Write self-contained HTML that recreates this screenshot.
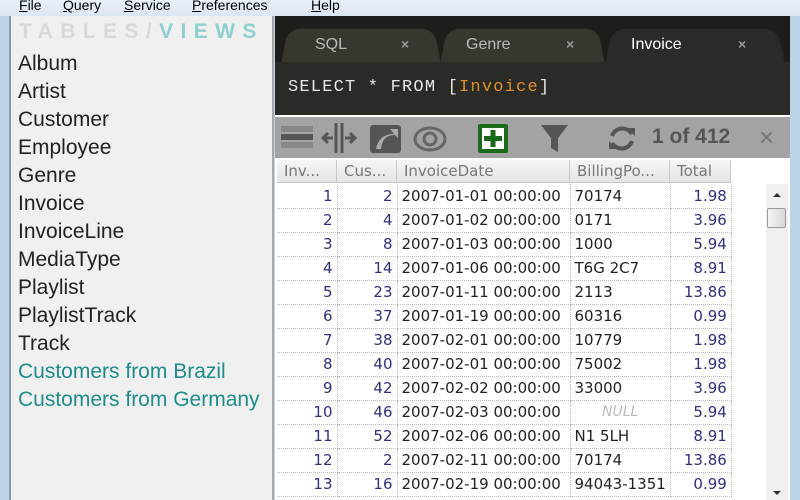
<!DOCTYPE html>
<html><head><meta charset="utf-8"><style>
*{margin:0;padding:0;box-sizing:border-box}
body{width:800px;height:500px;overflow:hidden;background:#bcd3ea;font-family:"Liberation Sans","DejaVu Sans",sans-serif;position:relative}
.menu{position:absolute;left:0;top:0;width:800px;height:16px;background:linear-gradient(#e9f0f8,#dbe6f3);font-size:14px;color:#000}
.menu span{position:absolute;top:-3px}
.menu u{text-decoration:underline}
.left{position:absolute;left:9px;top:16px;width:265px;height:484px;background:#f0f0f0;border-left:2px solid #8a9bb0;border-right:2px solid #a8a8a8}
.hdr{position:absolute;left:8px;top:4px;font-size:21px;font-weight:bold;letter-spacing:7.4px;color:#d8d8d8;white-space:nowrap}
.hdr b{color:#8fcfcf}
.item{position:absolute;left:7px;font-size:21px;color:#222}
.view{color:#1f8c8c}
.right{position:absolute;left:275px;top:16px;width:515px;height:484px;background:#fff}
.dark{position:absolute;left:0;top:0;width:515px;height:99px;background:#1d1d1a}
.code{position:absolute;left:0;top:46px;width:515px;height:53px;background:#2a2a26}
.tab{position:absolute;top:9px;height:40px;background:#37372f;border-radius:14px 14px 0 0;transform:perspective(60px) rotateX(8deg);transform-origin:bottom}
.tl{position:absolute;top:20px;font-size:16px;color:#bbb}
.tx{position:absolute;top:20px;font-size:14px;color:#999;font-weight:bold}
.sql{position:absolute;left:13px;top:62px;font-family:"Liberation Mono","DejaVu Sans Mono",monospace;font-size:17px;color:#e8e8e8;letter-spacing:1.2px}
.tb{position:absolute;left:0;top:101px;width:515px;height:41px;background:#a3a3a3}
.th{position:absolute;top:144px;height:23px;background:linear-gradient(#f6f6f6,#e4e4e4);border-right:1px solid #c8c8c8;border-bottom:1px solid #c8c8c8;font-family:"DejaVu Sans",sans-serif;font-size:15px;color:#777;padding:2px 0 0 7px;white-space:nowrap;overflow:hidden}
table{position:absolute;left:2px;top:168px;border-collapse:collapse;font-family:"DejaVu Sans",sans-serif;font-size:15px;table-layout:fixed}
td{height:24px;border-right:1px dotted #bbb;border-bottom:1px dotted #bbb;padding:0 4px;white-space:nowrap;color:#222;overflow:hidden}
td.n{text-align:right;color:#303080}
td.nu{text-align:center;color:#bbb;font-style:italic;font-size:14px}
.sb{position:absolute;left:491px;top:168px;width:22px;height:316px;background:#f0f0f0}
</style></head><body>
<div class="menu"><span style="left:19px"><u>F</u>ile</span><span style="left:63px"><u>Q</u>uery</span><span style="left:124px"><u>S</u>ervice</span><span style="left:192px"><u>P</u>references</span><span style="left:311px"><u>H</u>elp</span></div>
<div class="left">
<div class="hdr">TABLES/<b>VIEWS</b></div>
<div class="item" style="top:36px">Album</div>
<div class="item" style="top:64px">Artist</div>
<div class="item" style="top:92px">Customer</div>
<div class="item" style="top:120px">Employee</div>
<div class="item" style="top:148px">Genre</div>
<div class="item" style="top:176px">Invoice</div>
<div class="item" style="top:204px">InvoiceLine</div>
<div class="item" style="top:232px">MediaType</div>
<div class="item" style="top:260px">Playlist</div>
<div class="item" style="top:288px">PlaylistTrack</div>
<div class="item" style="top:316px">Track</div>
<div class="item view" style="top:344px">Customers from Brazil</div>
<div class="item view" style="top:372px">Customers from Germany</div>
</div>
<div class="right">
<div class="dark"></div>
<div class="tab" style="left:6px;width:160px"></div>
<div class="tab" style="left:165px;width:165px"></div>
<div class="tab" style="left:330px;width:180px;background:#2a2a26"></div>
<div class="code"></div>
<div class="tl" style="left:40px">SQL</div><div class="tx" style="left:126px">×</div>
<div class="tl" style="left:191px">Genre</div><div class="tx" style="left:291px">×</div>
<div class="tl" style="left:356px;color:#fff">Invoice</div><div class="tx" style="left:463px">×</div>
<div class="sql">SELECT * FROM [<span style="color:#e0902a">Invoice</span>]</div>
<div class="tb">
<svg width="515" height="41" style="position:absolute;left:0;top:0">
<g fill="#555"><rect x="6" y="9" width="32" height="6" fill="#888"/><rect x="6" y="17" width="32" height="6"/><rect x="6" y="25" width="32" height="6" fill="#888"/></g>
<g stroke="#555" stroke-width="3" fill="none"><path d="M61 6v30M67 6v30M49 21h9M70 21h9"/><path d="M53 16l-5 5 5 5M75 16l5 5-5 5"/></g>
<rect x="95" y="8" width="31" height="28" rx="3" fill="#555"/><path d="M101 32c2-10 8-15 18-15l-4-5h8v9l-3-3c-8 0-13 4-14 14z" fill="#aaa"/>
<ellipse cx="155" cy="22" rx="15" ry="11" fill="none" stroke="#666" stroke-width="3"/><circle cx="155" cy="22" r="6" fill="none" stroke="#666" stroke-width="3"/>
<rect x="203" y="7" width="30" height="29" rx="2" fill="#1a6a1a"/><rect x="207" y="11" width="22" height="21" fill="#fff"/><path d="M218 13v17M209 21.5h18" stroke="#1a6a1a" stroke-width="5"/>
<path d="M266 8h27l-10 13v14l-7-4v-10z" fill="#555"/>
<path d="M357 17a11 11 0 0 0-20 2M337 26a11 11 0 0 0 20-2" stroke="#555" stroke-width="4" fill="none"/><path d="M352 11l8 0v8z M342 32l-8 0v-8z" fill="#555"/>
</svg>
<div style="position:absolute;left:377px;top:8px;font-size:21px;font-weight:bold;color:#555">1 of 412</div>
<div style="position:absolute;left:484px;top:5px;font-size:26px;color:#777">×</div>
</div>
<div class="th" style="left:2px;width:60px">Inv...</div>
<div class="th" style="left:62px;width:60px">Cus...</div>
<div class="th" style="left:122px;width:173px">InvoiceDate</div>
<div class="th" style="left:295px;width:100px">BillingPo...</div>
<div class="th" style="left:395px;width:61px">Total</div>
<table>
<colgroup><col style="width:60px"><col style="width:60px"><col style="width:173px"><col style="width:100px"><col style="width:61px"></colgroup>
<tr><td class="n">1</td><td class="n">2</td><td>2007-01-01 00:00:00</td><td>70174</td><td class="n">1.98</td></tr>
<tr><td class="n">2</td><td class="n">4</td><td>2007-01-02 00:00:00</td><td>0171</td><td class="n">3.96</td></tr>
<tr><td class="n">3</td><td class="n">8</td><td>2007-01-03 00:00:00</td><td>1000</td><td class="n">5.94</td></tr>
<tr><td class="n">4</td><td class="n">14</td><td>2007-01-06 00:00:00</td><td>T6G 2C7</td><td class="n">8.91</td></tr>
<tr><td class="n">5</td><td class="n">23</td><td>2007-01-11 00:00:00</td><td>2113</td><td class="n">13.86</td></tr>
<tr><td class="n">6</td><td class="n">37</td><td>2007-01-19 00:00:00</td><td>60316</td><td class="n">0.99</td></tr>
<tr><td class="n">7</td><td class="n">38</td><td>2007-02-01 00:00:00</td><td>10779</td><td class="n">1.98</td></tr>
<tr><td class="n">8</td><td class="n">40</td><td>2007-02-01 00:00:00</td><td>75002</td><td class="n">1.98</td></tr>
<tr><td class="n">9</td><td class="n">42</td><td>2007-02-02 00:00:00</td><td>33000</td><td class="n">3.96</td></tr>
<tr><td class="n">10</td><td class="n">46</td><td>2007-02-03 00:00:00</td><td class="nu">NULL</td><td class="n">5.94</td></tr>
<tr><td class="n">11</td><td class="n">52</td><td>2007-02-06 00:00:00</td><td>N1 5LH</td><td class="n">8.91</td></tr>
<tr><td class="n">12</td><td class="n">2</td><td>2007-02-11 00:00:00</td><td>70174</td><td class="n">13.86</td></tr>
<tr><td class="n">13</td><td class="n">16</td><td>2007-02-19 00:00:00</td><td>94043-1351</td><td class="n">0.99</td></tr>
</table>
<div class="sb">
<div style="position:absolute;left:7px;top:9px;width:0;height:0;border-left:4px solid transparent;border-right:4px solid transparent;border-bottom:4px solid #333"></div>
<div style="position:absolute;left:1px;top:24px;width:19px;height:20px;background:linear-gradient(90deg,#f4f4f4,#d8d8d8);border:1px solid #999;border-radius:2px"></div>
<div style="position:absolute;left:7px;top:307px;width:0;height:0;border-left:4px solid transparent;border-right:4px solid transparent;border-top:4px solid #333"></div>
</div>
</div>
</body></html>
